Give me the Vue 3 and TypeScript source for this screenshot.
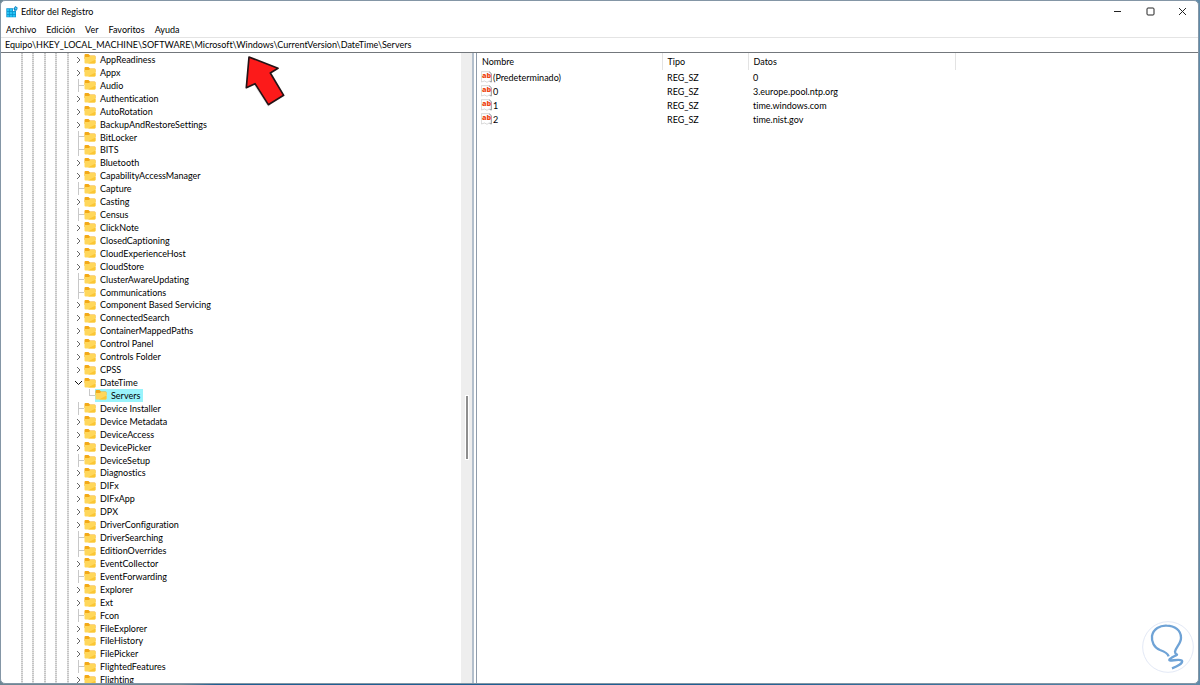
<script setup lang="ts">
import { ref } from 'vue'

interface TreeKey {
  name: string
  expandable?: boolean
  open?: boolean
  child?: boolean
}

interface RegValue {
  name: string
  type: string
  data: string
}

const menus: string[] = ['Archivo', 'Edición', 'Ver', 'Favoritos', 'Ayuda']

const path = ref('Equipo\\HKEY_LOCAL_MACHINE\\SOFTWARE\\Microsoft\\Windows\\CurrentVersion\\DateTime\\Servers')

// ">" marks a collapsed key with subkeys, "v" an open one, "-" a child of the open key.
const source: string[] = [
  '>AppReadiness', '>Appx', 'Audio', '>Authentication', '>AutoRotation',
  '>BackupAndRestoreSettings', 'BitLocker', 'BITS', '>Bluetooth',
  '>CapabilityAccessManager', 'Capture', '>Casting', 'Census', '>ClickNote',
  '>ClosedCaptioning', '>CloudExperienceHost', '>CloudStore',
  'ClusterAwareUpdating', 'Communications', '>Component Based Servicing',
  '>ConnectedSearch', '>ContainerMappedPaths', '>Control Panel',
  '>Controls Folder', '>CPSS', 'vDateTime', '-Servers', 'Device Installer',
  '>Device Metadata', '>DeviceAccess', '>DevicePicker', 'DeviceSetup',
  '>Diagnostics', '>DIFx', '>DIFxApp', '>DPX', '>DriverConfiguration',
  'DriverSearching', 'EditionOverrides', '>EventCollector',
  'EventForwarding', '>Explorer', '>Ext', 'Fcon', '>FileExplorer',
  '>FileHistory', '>FilePicker', 'FlightedFeatures', '>Flighting',
]

const keys: TreeKey[] = source.map((entry) => {
  const mark = entry[0]
  const name = entry.replace(/^[>v-]/, '')
  return { name, expandable: mark === '>' || mark === 'v', open: mark === 'v', child: mark === '-' }
})

const selected = ref('Servers')

const values: RegValue[] = [
  { name: '(Predeterminado)', type: 'REG_SZ', data: '0' },
  { name: '0', type: 'REG_SZ', data: '3.europe.pool.ntp.org' },
  { name: '1', type: 'REG_SZ', data: 'time.windows.com' },
  { name: '2', type: 'REG_SZ', data: 'time.nist.gov' },
]
</script>

<template>
  <div class="desktop">
    <div class="window">
      <header class="titlebar">
        <svg class="app-icon" viewBox="0 0 36 36" aria-hidden="true">
          <path d="M1 7h20v8h9v19H1z" fill="#0a8ecb" />
          <path d="M3 9h7v6H3zM12 9h7v6h-7zM3 17h7v7H3zM12 17h7v7h-7zM21 17h7v7h-7zM3 26h7v6H3zM12 26h7v6h-7zM21 26h7v6h-7z" fill="#25c3f3" />
          <path d="M28 0l7 5-2 8-7 2-4-7z" fill="#0d86c5" />
          <path d="M28 4l4 2-1 5-4-2z" fill="#5bd5fa" />
        </svg>
        <h1 class="title">Editor del Registro</h1>
        <div class="controls">
          <button type="button" aria-label="Minimizar">
            <svg viewBox="0 0 9 9"><path d="M1 4.500h7" /></svg>
          </button>
          <button type="button" aria-label="Maximizar">
            <svg viewBox="0 0 9 9"><rect x="1" y="1" width="7" height="7" rx="1" /></svg>
          </button>
          <button type="button" aria-label="Cerrar">
            <svg viewBox="0 0 9 9"><path d="M1 1l7 7M8 1l-7 7" /></svg>
          </button>
        </div>
      </header>

      <nav class="menubar">
        <button v-for="m in menus" :key="m" type="button">{{ m }}</button>
      </nav>

      <input v-model="path" class="address" type="text" aria-label="Ruta de la clave" spellcheck="false" />

      <main class="panes">
        <section class="tree-pane">
          <div class="guides" aria-hidden="true">
            <i v-for="n in 5" :key="n"></i>
          </div>
          <ul class="tree">
            <li v-for="k in keys" :key="k.name" :class="{ child: k.child }">
              <button v-if="k.expandable" type="button" class="expander" :aria-label="k.name" :aria-expanded="k.open">
                <svg v-if="k.open" class="down" viewBox="0 0 9 9"><path d="M1 3l3.500 3.500L8 3" /></svg>
                <svg v-else viewBox="0 0 9 9"><path d="M3 2l3 3-3 3" /></svg>
              </button>
              <span v-else class="branch"></span>
              <button type="button" class="key" :class="{ selected: selected === k.name }" @click="selected = k.name">
                <svg class="folder" viewBox="0 0 24 20" aria-hidden="true">
                  <path d="M1 2q0-2 2-2h6l3 3h9q2 0 2 2v5H1z" fill="#f3a916" />
                  <path d="M1 6h9l2-2h9q2 0 2 2v11q0 2-2 2H3q-2 0-2-2z" fill="#ffd75a" />
                  <path d="M23 11v6q0 2-2 2H8z" fill="#fbc634" />
                </svg>
                <span>{{ k.name }}</span>
              </button>
            </li>
          </ul>
          <div class="scrollbar" aria-hidden="true">
            <div class="thumb"></div>
          </div>
        </section>

        <section class="value-pane">
          <table>
            <colgroup>
              <col class="c-name" />
              <col class="c-type" />
              <col class="c-data" />
              <col />
            </colgroup>
            <thead>
              <tr><th>Nombre</th><th>Tipo</th><th>Datos</th><td></td></tr>
            </thead>
            <tbody>
              <tr v-for="v in values" :key="v.name">
                <td>
                  <span class="name">
                    <svg class="value-icon" viewBox="0 0 33 36" aria-hidden="true">
                      <path d="M1 2h23l7 6v25l-7-3-6 4-7-4-10 3z" fill="#fff" stroke="#c4c4c4" stroke-width="2" />
                      <path d="M24 2l7 6v25l-5-2" fill="none" stroke="#9a9ea3" stroke-width="3" />
                      <text x="3" y="22">ab</text>
                    </svg>
                    {{ v.name }}
                  </span>
                </td>
                <td>{{ v.type }}</td>
                <td>{{ v.data }}</td>
                <td></td>
              </tr>
            </tbody>
          </table>
        </section>
      </main>
    </div>

    <svg class="pointer" viewBox="0 0 150 180" aria-hidden="true">
      <path class="shade" d="M26 24L16 116l26-10 42 64 8-6" />
      <path class="arrow" d="M27 21L114 55 91 69l40 67-46 28-40-63-26 12z" />
    </svg>

    <svg class="bulb" viewBox="0 0 156 156" aria-hidden="true">
      <circle cx="78" cy="78" r="76" />
      <path d="M80 106C77 96 66 91 54 87 36 80 28 62 30 45 34 23 54 13 74 14c24 0 43 14 43 36 0 18-15 28-18 42 0 4 2 7 6 9-8 5-20 9-23 15-2 8 28-5 38 3 4 8-15 17-30 23" />
    </svg>
  </div>
</template>

<style>
html,
body {
  margin: 0;
}
</style>

<style scoped>
* {
  box-sizing: border-box;
}

.desktop {
  position: relative;
  height: 100vh;
  padding: 0 1px 1px 0;
  overflow: hidden;
  background: linear-gradient(90deg, #6d8794 0 15%, #1f5f92 18% 60%, #5f8aa8);
  color: #000;
  font: 9px/13px Lato, "Open Sans", sans-serif;
  font-variant-ligatures: none;
}

button {
  margin: 0;
  padding: 0;
  border: 0;
  background: none;
  color: inherit;
  font: inherit;
  font-variant-ligatures: none;
}

.window {
  display: flex;
  flex-direction: column;
  height: 100%;
  overflow: hidden;
  border: 1px solid #8496a6;
  border-radius: 5px;
  background: #fff;
}

.titlebar {
  display: flex;
  flex: none;
  align-items: center;
  height: 21px;
  padding-left: 5px;
}

.app-icon {
  width: 12px;
  height: 12px;
}

.title {
  margin: 0 0 0 3px;
  font: inherit;
}

.controls {
  display: flex;
  margin-left: auto;
}

.controls button {
  display: grid;
  place-items: center;
  width: 33px;
  height: 19px;
}

.controls button:last-child {
  width: 31px;
}

.controls svg {
  width: 9px;
  height: 9px;
  fill: none;
  stroke: #222;
}

.menubar {
  display: flex;
  flex: none;
  gap: 10px;
  height: 15px;
  padding-left: 5px;
}

.address {
  flex: none;
  height: 15px;
  padding: 0 4px 1px;
  border: 0;
  border-top: 1px solid #e4e4e4;
  outline: 0;
  background: #fff;
  color: inherit;
  font: inherit;
  font-variant-ligatures: none;
}

.panes {
  display: flex;
  flex: 1;
  min-height: 0;
  border-top: 1px solid #73777c;
}

.tree-pane {
  display: flex;
  flex: 0 0 auto;
  width: 40%;
  max-width: 473px;
  border-right: 2px solid #b3bfcc;
}

.guides {
  display: grid;
  grid-template-columns: repeat(5, 1fr);
  width: 57px;
  margin-left: 20px;
}

.guides i {
  width: 2px;
  background: repeating-linear-gradient(#c4c4c4 0 1px, #e4e4e4 1px 2px);
}

.tree {
  display: flex;
  flex: 1;
  flex-direction: column;
  margin: 0 0 -3px -5px;
  padding: 0;
  list-style: none;
}

.tree li {
  display: flex;
  flex: 0 1 13px;
  align-items: center;
  min-height: 0;
}

.tree li.child {
  padding-left: 11px;
}

.expander {
  display: grid;
  place-items: center;
  width: 11px;
  height: 13px;
}

.expander svg {
  width: 9px;
  height: 9px;
  fill: none;
  stroke: #666;
}

.expander .down {
  stroke: #111;
}

.branch {
  align-self: stretch;
  width: 6px;
  margin-left: 5px;
  border-left: 1px solid #c8c8c8;
  background: linear-gradient(#c8c8c8, #c8c8c8) center / 100% 1px no-repeat;
}

.child .branch {
  height: 7px;
  align-self: flex-start;
  background-position: bottom;
}

.key {
  display: flex;
  align-items: center;
  height: 13px;
  padding-right: 3px;
  white-space: nowrap;
}

.key.selected {
  background: #99f3fb;
}

.folder {
  width: 12px;
  height: 10px;
  margin-right: 4px;
}

.scrollbar {
  display: flex;
  justify-content: center;
  width: 11px;
  background: #eee;
}

.thumb {
  width: 2px;
  height: 10%;
  margin-top: 343px;
  background: #8e8e8e;
  outline: 1px solid #fff;
}

.value-pane {
  flex: 1;
  min-width: 0;
  margin-left: 2px;
  border-left: 1px solid #8f9cab;
}

table {
  width: 100%;
  border-collapse: collapse;
  table-layout: fixed;
}

.c-name {
  width: 185px;
}

.c-type {
  width: 86px;
}

.c-data {
  width: 207px;
}

th,
td {
  height: 14px;
  padding: 0 4px;
  font-weight: inherit;
  text-align: left;
  white-space: nowrap;
}

th {
  height: 17px;
  padding-left: 5px;
  border-right: 1px solid #e3e3e3;
}

td + td {
  padding-left: 5px;
}

.name {
  display: flex;
  align-items: center;
}

.value-icon {
  width: 11px;
  height: 12px;
  margin-right: 1px;
}

.value-icon text {
  fill: #ee4a18;
  font: 900 22px "Open Sans", sans-serif;
}

.pointer {
  position: absolute;
  top: 50px;
  left: 240px;
  width: 50px;
  height: 60px;
}

.arrow {
  fill: #fc1a1a;
  stroke: #231316;
  stroke-width: 5;
  stroke-linejoin: round;
}

.shade {
  fill: #ccc;
  opacity: 0.5;
}

.bulb {
  position: absolute;
  right: 6px;
  bottom: 12px;
  width: 52px;
  height: 52px;
  fill: none;
}

.bulb circle {
  stroke: #e3e9f6;
  stroke-width: 3;
}

.bulb path {
  stroke: #6fa3d6;
  stroke-width: 7;
  stroke-linejoin: round;
}
</style>
